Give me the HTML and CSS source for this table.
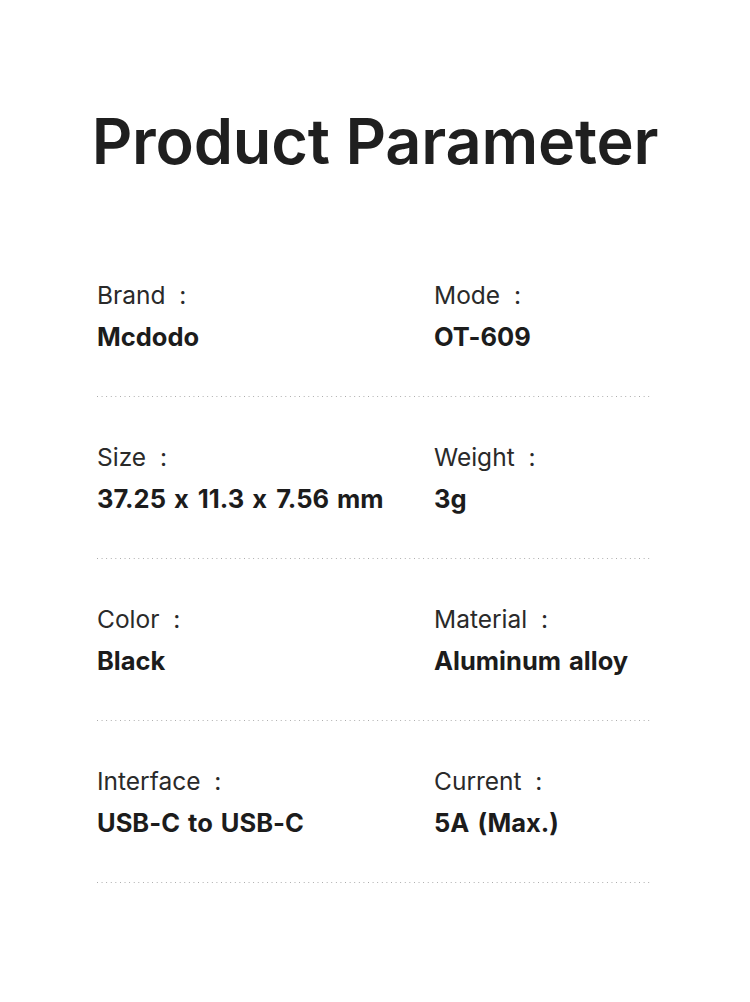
FILE: index.html
```html
<!DOCTYPE html>
<html>
<head>
<meta charset="utf-8">
<link rel="stylesheet" href="styles.css">
</head>
<body>
<div class="page">
  <h1 class="title">Product Parameter</h1>
  <div class="params">
    <div class="row">
      <div class="cell"><div class="label">Brand&nbsp; :</div><div class="value">Mcdodo</div></div>
      <div class="cell"><div class="label">Mode&nbsp; :</div><div class="value">OT-609</div></div>
    </div>
    <div class="row">
      <div class="cell"><div class="label">Size&nbsp; :</div><div class="value">37.25 <span class="times">x</span> 11.3 <span class="times">x</span> 7.56 mm</div></div>
      <div class="cell"><div class="label">Weight&nbsp; :</div><div class="value">3g</div></div>
    </div>
    <div class="row">
      <div class="cell"><div class="label">Color&nbsp; :</div><div class="value">Black</div></div>
      <div class="cell"><div class="label">Material&nbsp; :</div><div class="value">Aluminum alloy</div></div>
    </div>
    <div class="row">
      <div class="cell"><div class="label">Interface&nbsp; :</div><div class="value">USB-C to USB-C</div></div>
      <div class="cell"><div class="label">Current&nbsp; :</div><div class="value">5A (Max.)</div></div>
    </div>
  </div>
</div>
</body>
</html>
```
FILE: styles.css
```css
html, body {
  margin: 0;
  padding: 0;
  background: #ffffff;
}
.page {
  width: 750px;
  height: 1002px;
  font-family: "Inter", "Noto Sans CJK SC", sans-serif;
  font-feature-settings: "calt" 0;
  color: #222222;
  box-sizing: border-box;
  padding-top: 104px;
}
.title {
  margin: 0;
  text-align: center;
  font-size: 63px;
  font-weight: 600;
  line-height: 74px;
  letter-spacing: -0.2px;
  color: #1f1f1f;
}
.params {
  margin: 102px 0 0 97px;
  width: 553px;
}
.row {
  display: grid;
  grid-template-columns: 337px 1fr;
  height: 162px;
  position: relative;
}
.row::after {
  content: "";
  position: absolute;
  left: 0;
  right: 0;
  top: 116px;
  height: 1px;
  background-image: linear-gradient(to right, #a8a8a8 1px, transparent 1px);
  background-size: 4.6px 1px;
}
.cell {
  display: flex;
  flex-direction: column;
}
.label {
  font-size: 24.5px;
  font-weight: 400;
  line-height: 30px;
  color: #2a2a2a;
}
.value {
  margin-top: 12px;
  font-size: 25.5px;
  font-weight: 700;
  line-height: 30px;
  word-spacing: 2px;
  color: #1c1c1c;
}
.times {
  letter-spacing: 1px;
}
```
